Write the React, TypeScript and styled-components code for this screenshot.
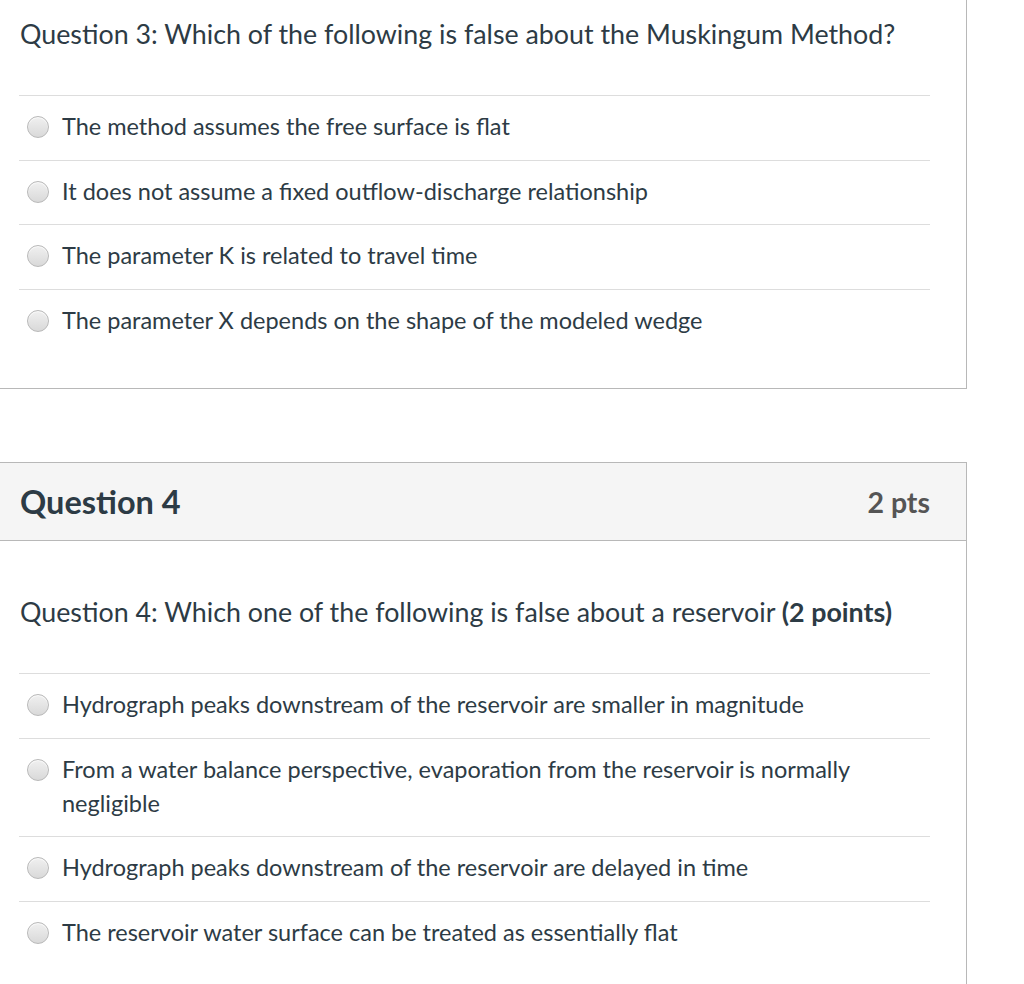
import React from 'react';
import styled, { createGlobalStyle } from 'styled-components';

const GlobalStyle = createGlobalStyle`
  html, body {
    margin: 0;
    padding: 0;
    background: #ffffff;
  }
  body {
    font-family: Lato, "Open Sans", "Liberation Sans", sans-serif;
    color: #2d3b45;
  }
`;

const Page = styled.div`
  margin-left: -1px;
  width: 968px;
  padding-bottom: 40px;
`;

const Card = styled.section<{ $cut?: boolean }>`
  border: 1px solid #b8b8b8;
  margin-top: ${(p) => (p.$cut ? '-38px' : '73px')};
  background: #fff;
`;

const Header = styled.header`
  display: flex;
  align-items: center;
  justify-content: space-between;
  height: 77px;
  padding: 0 36px 0 20px;
  background: #f5f5f5;
  border-bottom: 1px solid #b8b8b8;
`;

const HeaderTitle = styled.h2`
  margin: 0;
  font-size: 32.5px;
  font-weight: 700;
  color: #2d3b45;
`;

const Points = styled.div`
  font-size: 28.5px;
  font-weight: 700;
  color: #555555;
`;

const Body = styled.div`
  padding: 54px 36px 35px 20px;
`;

const QuestionText = styled.p`
  margin: 0 0 44px;
  font-size: 26.8px;
  line-height: 34px;
  color: #2d3b45;

  strong {
    font-weight: 700;
  }
`;

const AnswerList = styled.div`
  margin-left: -1px;
`;

const AnswerRow = styled.label`
  display: flex;
  align-items: flex-start;
  gap: 13px;
  padding: 13px 0 16.5px 8px;
  border-top: 1px solid #dddddd;
  font-size: 23.5px;
  line-height: 34px;
  color: #2d3b45;
`;

const Radio = styled.span`
  flex: 0 0 auto;
  width: 20px;
  height: 20px;
  margin-top: 7px;
  border-radius: 50%;
  border: 1px solid #b9b9b9;
  background: linear-gradient(#f0f0f0, #d9d9d9);
  box-shadow: inset 0 1px 1px rgba(255, 255, 255, 0.8);
`;

type Answer = string;

function Answers({ items }: { items: Answer[] }) {
  return (
    <AnswerList>
      {items.map((a) => (
        <AnswerRow key={a}>
          <Radio />
          <span>{a}</span>
        </AnswerRow>
      ))}
    </AnswerList>
  );
}

const q3: Answer[] = [
  'The method assumes the free surface is flat',
  'It does not assume a fixed outflow-discharge relationship',
  'The parameter K is related to travel time',
  'The parameter X depends on the shape of the modeled wedge',
];

const q4: Answer[] = [
  'Hydrograph peaks downstream of the reservoir are smaller in magnitude',
  'From a water balance perspective, evaporation from the reservoir is normally negligible',
  'Hydrograph peaks downstream of the reservoir are delayed in time',
  'The reservoir water surface can be treated as essentially flat',
];

export default function App() {
  return (
    <>
      <GlobalStyle />
      <Page>
        <Card $cut>
          <Body>
            <QuestionText>
              Question 3: Which of the following is false about the Muskingum Method?
            </QuestionText>
            <Answers items={q3} />
          </Body>
        </Card>
        <Card>
          <Header>
            <HeaderTitle>Question 4</HeaderTitle>
            <Points>2 pts</Points>
          </Header>
          <Body>
            <QuestionText>
              Question 4: Which one of the following is false about a reservoir{' '}
              <strong>(2 points)</strong>
            </QuestionText>
            <Answers items={q4} />
          </Body>
        </Card>
      </Page>
    </>
  );
}
